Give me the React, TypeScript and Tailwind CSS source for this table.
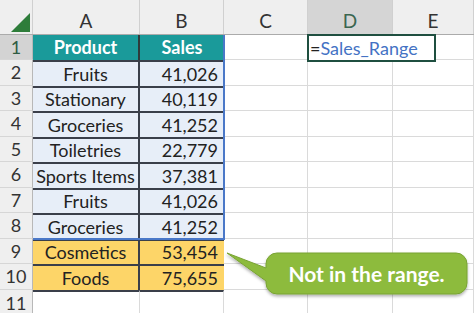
const cols = ['A', 'B', 'C', 'D', 'E'];
const colW = ['w-[107px]', 'w-[84px]', 'w-[84px]', 'w-[85px]', 'flex-1'];

const data: [string, string][] = [
  ['Fruits', '41,026'],
  ['Stationary', '40,119'],
  ['Groceries', '41,252'],
  ['Toiletries', '22,779'],
  ['Sports Items', '37,381'],
  ['Fruits', '41,026'],
  ['Groceries', '41,252'],
  ['Cosmetics', '53,454'],
  ['Foods', '75,655'],
];

function RowNum({ n, active }: { n: number; active?: boolean }) {
  return (
    <div
      className={`w-[33px] shrink-0 flex items-center justify-center border-r border-r-[#b8b8b8] border-b border-b-[#d6d6d6] text-[18px] ${
        active ? 'bg-[#d3d3d3] text-[#2f5c43]' : 'bg-[#efefef] text-[#333]'
      }`}
    >
      {n}
    </div>
  );
}

function Blank({ w }: { w: string }) {
  return <div className={`${w} shrink-0 border-r border-b border-[#dadada] bg-white`} />;
}

export default function App() {
  return (
    <div
      className="relative w-[474px] h-[313px] overflow-hidden bg-white text-[#222]"
      style={{ fontFamily: 'Lato, "Open Sans", sans-serif' }}
    >
      {/* column headers */}
      <div className="flex h-[35px] bg-[#efefef] border-b border-[#ababab]">
        <div className="w-[33px] shrink-0 relative border-r border-[#d0d0d0]">
          <svg className="absolute left-[11px] top-[13px]" width="20" height="19" viewBox="0 0 20 19">
            <polygon points="19,0 19,19 0,19" fill="#2e7d3a" />
          </svg>
        </div>
        {cols.map((c, i) => (
          <div
            key={c}
            className={`${colW[i]} shrink-0 flex items-end justify-center pb-[4px] leading-none text-[19px] border-r border-[#d0d0d0] ${
              c === 'D' ? 'bg-[#d5d5d5] text-[#3b6650]' : 'text-[#333]'
            }`}
          >
            {c}
          </div>
        ))}
      </div>

      {/* row 1 */}
      <div className="flex h-[25px]">
        <RowNum n={1} active />
        <div className="w-[107px] shrink-0 bg-[#1a9a9a] text-white font-bold text-[18px] flex items-center justify-center border-r-2 border-[#2f3b3b]">
          Product
        </div>
        <div className="w-[84px] shrink-0 bg-[#1a9a9a] text-white font-bold text-[18px] flex items-center justify-center">
          Sales
        </div>
        <Blank w="w-[84px]" />
        <Blank w="w-[85px]" />
        <Blank w="flex-1" />
      </div>

      {data.map(([p, s], i) => {
        const n = i + 2;
        const gold = n >= 9;
        const bg = gold ? 'bg-[#fdd568]' : 'bg-[#e7eef8]';
        return (
          <div key={n} className={`flex ${i % 2 === 0 ? 'h-[26px]' : 'h-[25px]'}`}>
            <RowNum n={n} />
            <div
              className={`w-[107px] shrink-0 ${bg} border-t-2 border-r-2 border-[#3a3f4a] flex items-center justify-center text-[18px]`}
            >
              {p}
            </div>
            <div className={`w-[84px] shrink-0 ${bg} border-t-2 border-[#3a3f4a] flex items-center justify-end pr-[6px] text-[18px]`}>
              {s}
            </div>
            <Blank w="w-[84px]" />
            <Blank w="w-[85px]" />
            <Blank w="flex-1" />
          </div>
        );
      })}

      {/* row 11 */}
      <div className="flex h-[26px]">
        <div className="w-[33px] shrink-0 flex items-start pt-[4px] leading-none justify-center border-r border-[#b8b8b8] bg-[#efefef] text-[18px] text-[#333]">
          11
        </div>
        <div className="w-[107px] shrink-0 border-t-2 border-[#3a3f4a] border-r border-r-[#dadada]" />
        <div className="w-[84px] shrink-0 border-t-2 border-[#3a3f4a] border-r border-r-[#dadada]" />
        <Blank w="w-[84px]" />
        <Blank w="w-[85px]" />
        <Blank w="flex-1" />
      </div>

      {/* blue range outline A1:B8 */}
      <div className="absolute left-[33px] top-[35px] w-[192px] h-[205px] border-r-2 border-b-2 border-[#4a78c8] pointer-events-none" />

      {/* formula cell D1 */}
      <div className="absolute left-[307px] top-[34px] w-[129px] h-[28px] border-2 border-[#1f4f40] bg-white flex items-center pl-[1px] text-[18px] leading-none">
        <span className="text-[#222]">=</span>
        <span className="text-[#4472c4]">Sales_Range</span>
      </div>

      {/* callout */}
      <svg className="absolute left-[222px] top-[248px]" width="252" height="56" viewBox="0 0 252 56">
        <defs>
          <filter id="sh" x="-10%" y="-20%" width="120%" height="160%">
            <feDropShadow dx="0" dy="2" stdDeviation="1.5" floodColor="#000" floodOpacity="0.3" />
          </filter>
        </defs>
        <path
          d="M55 5 H234 A11 11 0 0 1 245 16 V35 A11 11 0 0 1 234 46 H55 A11 11 0 0 1 44 35 V33 L5 5 L44 20 V16 A11 11 0 0 1 55 5 Z"
          fill="#8dbb3e"
          stroke="#79a334"
          strokeWidth="1"
          filter="url(#sh)"
        />
      </svg>
      <div className="absolute left-[266px] top-[253px] w-[201px] h-[41px] flex items-center justify-center text-white font-bold text-[21px]">
        Not in the range.
      </div>
    </div>
  );
}
